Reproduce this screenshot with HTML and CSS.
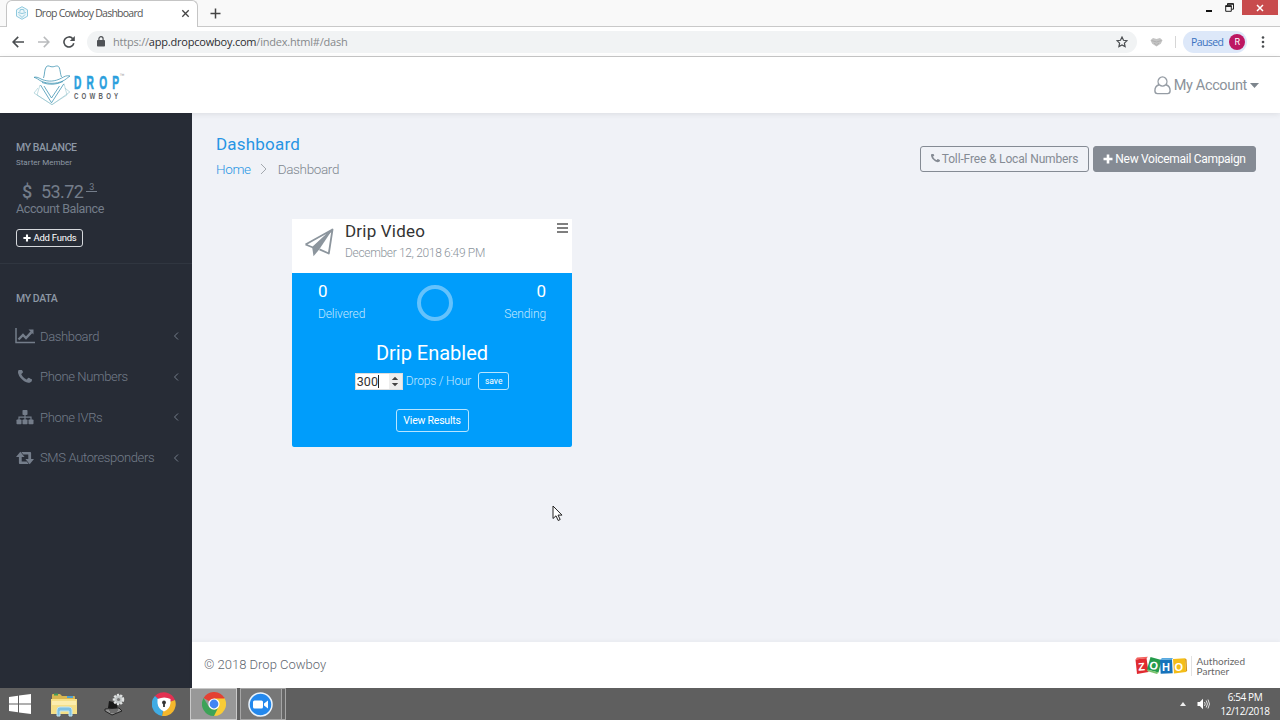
FILE: index.html
```html
<!DOCTYPE html>
<html lang="en">
<head>
  <meta charset="utf-8">
  <meta name="viewport" content="width=device-width, initial-scale=1">
  <title>Drop Cowboy Dashboard</title>
  <link rel="stylesheet" href="styles.css">
</head>
<body>
  <!-- shared icons -->
  <svg class="defs">
    <symbol id="phone" viewBox="192 256 1408 1408">
      <path fill="currentColor" d="M1600 1240q0 27-10 70.5t-21 68.5q-21 50-122 106-94 51-186 51-27 0-53-3.5t-57.5-12.5-47-14.5-55.5-20.5-49-18q-98-35-175-83-127-79-264-216t-216-264q-48-77-83-175-3-9-18-49t-20.5-55.5-14.5-47-12.5-57.5-3.5-53q0-92 51-186 56-101 106-122 25-11 68.5-21t70.5-10q14 0 21 3 18 6 53 76 11 19 30 54t35 63.5 31 53.5q3 4 17.5 25t21.5 35.5 7 28.5q0 20-28.5 50t-62 55-62 53-28.5 46q0 9 5 22.5t8.5 20.5 14 24 11.5 19q76 137 174 235t235 174q2 1 19 11.5t24 14 20.5 8.5 22.5 5q18 0 46-28.5t53-62 55-62 50-28.5q14 0 28.5 7t35.5 21.5 25 17.5q25 15 53.5 31t63.5 35 54 30q70 35 76 53 3 7 3 21z"/>
    </symbol>
    <symbol id="plus" viewBox="0 0 10 10">
      <path d="M5 .5v9M.5 5h9" stroke="currentColor" stroke-width="2.6"/>
    </symbol>
    <symbol id="angle" viewBox="0 0 6 10">
      <path d="M5 1.500L1.500 5 5 8.500" fill="none" stroke="currentColor"/>
    </symbol>
  </svg>

  <div class="screen">
    <div class="tabs">
      <div class="tab">
        <svg class="favicon" width="14" height="14" viewBox="0 0 14 14" fill="none" stroke="#8fc9de">
          <path d="M7 .7l5.500 3.100v6.400L7 13.300l-5.500-3.100V3.800z" fill="#edf7fa"/>
          <path d="M3 6.500q4 2 8 0M4.800 5.800l.6-2.300h3.200l.6 2.300M4 8.500l3 3 3-3"/>
        </svg>
        <span class="tab-title">Drop Cowboy Dashboard</span>
        <svg width="9" height="9" viewBox="0 0 9 9" stroke="#444" stroke-width="1.300"><path d="M1.300 1.300l6.400 6.400M7.700 1.300L1.300 7.700"/></svg>
      </div>
      <svg class="new-tab" width="11" height="11" viewBox="0 0 11 11" stroke="#444" stroke-width="1.500"><path d="M5.500 .5v10M.5 5.500h10"/></svg>
      <div class="window-btns">
        <svg width="8" height="14" viewBox="0 0 8 14"><path d="M1 10h6" stroke="#111" stroke-width="2"/></svg>
        <svg width="9" height="9" viewBox="0 0 9 9" fill="none" stroke="#222"><path d="M2.500 2.500V.7h6v5.500H6.500M.7 2.700h5.600v5.600H.7z"/><path d="M.5 3.200h6M2.500 1h6" stroke-width="1.600"/></svg>
        <div class="win-close">
          <svg width="8" height="8" viewBox="0 0 8 8" stroke="#fff" stroke-width="1.500"><path d="M1 1l6 6M7 1L1 7"/></svg>
        </div>
      </div>
    </div>

    <div class="toolbar">
      <svg width="12" height="12" viewBox="0 0 12 12" fill="none" stroke="#4a4d50" stroke-width="1.600"><path d="M12 6H1.300M6.200 .9L1.100 6l5.100 5.100"/></svg>
      <svg class="forward" width="12" height="12" viewBox="0 0 12 12" fill="none" stroke="#b9bbbd" stroke-width="1.500"><path d="M0 6h10.700M5.800 .9L10.900 6l-5.100 5.100"/></svg>
      <svg class="reload" width="12" height="12" viewBox="0 0 12 12"><path d="M10.800 7.200A5 5 0 1 1 9.700 2.600" fill="none" stroke="#4a4d50" stroke-width="1.600"/><path d="M11.800 0v5H6.800z" fill="#4a4d50"/></svg>
      <div class="url">
        <svg width="8" height="11" viewBox="0 0 8 11"><rect y="4" width="8" height="6.500" rx=".8" fill="#505357"/><path d="M1.900 4.500V2.800a2.100 2.100 0 0 1 4.200 0v1.700" fill="none" stroke="#505357" stroke-width="1.200"/></svg>
        <span class="address">https://<b>app.dropcowboy.com</b>/index.html#/dash</span>
        <svg class="star" width="12" height="12" viewBox="0 0 12 12"><path d="M6 1.100l1.500 3.200 3.500.4-2.600 2.400.7 3.500L6 8.900l-3.100 1.700.7-3.500L1 4.700l3.500-.4z" fill="none" stroke="#4a4d50" stroke-width="1.200"/></svg>
      </div>
      <svg class="ext" width="13" height="10" viewBox="0 0 13 10"><path d="M.5 3.200L3 1l3.500 1L10 1l2.500 2.200-1.700 3.500L6.500 9.500 2.200 6.700z" fill="#c4c4c4"/><path d="M1.500 3.500l5 1.500 5-1.500M4 6l2.500 2L9 6" fill="none" stroke="#a9a9a9" stroke-width=".8"/></svg>
      <div class="divider"></div>
      <div class="paused"><span>Paused</span><i>R</i></div>
      <svg class="dots" width="4" height="14" viewBox="0 0 4 14" fill="#4a4d50"><circle cx="2" cy="2.500" r="1.300"/><circle cx="2" cy="7" r="1.300"/><circle cx="2" cy="11.500" r="1.300"/></svg>
    </div>

    <div class="header">
      <svg class="logo" width="94" height="42" viewBox="0 0 94 42">
        <g fill="none" stroke="#4296b4" stroke-width=".8">
          <path d="M10.500 14c1.500-4 .5-8.500 3-11.500 2-1.800 3.500.8 6.500.3 2.500-.4 4.500-1.800 6 .4 1.500 2.800 1.200 7 2.500 9.800"/>
          <path d="M1 13.300c2.500-.8 5 .6 8 2.200 6.500 2.500 13 2.100 19.500-1.400 3-1.600 5-3 8.500-2.100-3 2-4.500 3.800-7 4.900-7 3.200-15 3.200-22 .2-2.500-1.200-4-3.100-7-3.800z"/>
          <path d="M9 18.500q11 4 21-1"/>
          <path d="M7 21L4 31l15 9.500L34 31l-3-11.500" stroke="#8bbcc6" stroke-width=".5"/>
          <path d="M7.500 21l11 17.800L30.700 20"/>
          <path d="M5 24l-4 5 18 11.800L36.800 28l-5-4" stroke="#7fb9c4" stroke-width=".5"/>
          <path d="M11 22l7.500 12 8-12"/>
        </g>
        <text class="logo-drop" transform="translate(41 25) scale(.55 1)" textLength="82">DROP</text>
        <text class="logo-cowboy" transform="translate(41 34.500) scale(.68 1)" textLength="65">COWBOY</text>
        <text class="logo-tm" x="86.500" y="13">™</text>
      </svg>
      <div class="account">
        <svg width="17" height="20" viewBox="0 0 17 20" fill="none" stroke="#959ca4" stroke-width="1.400"><path d="M5.300 9.800A4.400 4.700 0 1 1 11.700 9.800M5.300 9.800c-3 .7-4.400 3-4.400 6 0 1.800 1 2.800 2.500 2.800h10.200c1.500 0 2.500-1 2.500-2.800 0-3-1.400-5.300-4.400-6-1.800 1.500-4.600 1.500-6.400 0z"/></svg>
        <span>My Account</span>
        <svg width="9" height="5" viewBox="0 0 9 5"><path d="M0 0h9L4.500 5z" fill="#7d858d"/></svg>
      </div>
    </div>

    <div class="main">
      <div class="sidebar">
        <div class="balance-box">
          <div class="side-title">MY BALANCE</div>
          <div class="member">Starter Member</div>
          <div class="amount"><b>$</b><span>53.72</span><sup>3</sup></div>
          <div class="balance-label">Account Balance</div>
          <button class="add-funds"><svg width="8" height="8"><use href="#plus"/></svg><span>Add Funds</span></button>
        </div>
        <div class="side-title data-title">MY DATA</div>
        <ul class="menu">
          <li>
            <svg width="20" height="16" viewBox="0 0 20 16"><path d="M1 0v14.500h19" fill="none" stroke="currentColor" stroke-width="1.500"/><path d="M3.500 11.500L8 7l3 3 5.500-5.800" fill="none" stroke="currentColor" stroke-width="2.400"/><path d="M13.500 1.500H18.500v5z" fill="currentColor"/></svg>
            <span>Dashboard</span>
            <svg class="angle" width="6" height="10"><use href="#angle"/></svg>
          </li>
          <li>
            <svg width="20" height="14"><use href="#phone"/></svg>
            <span>Phone Numbers</span>
            <svg class="angle" width="6" height="10"><use href="#angle"/></svg>
          </li>
          <li>
            <svg width="20" height="16" viewBox="0 0 20 16" fill="currentColor"><rect x="7.500" y="1" width="5" height="5" rx=".8"/><rect x="1.500" y="10.500" width="5" height="4.800" rx=".8"/><rect x="7.500" y="10.500" width="5" height="4.800" rx=".8"/><rect x="13.500" y="10.500" width="5" height="4.800" rx=".8"/><path d="M10 5v6M4 11V8.200h12V11" fill="none" stroke="currentColor" stroke-width="1.200"/></svg>
            <span>Phone IVRs</span>
            <svg class="angle" width="6" height="10"><use href="#angle"/></svg>
          </li>
          <li>
            <svg width="20" height="14" viewBox="0 0 20 14" fill="currentColor"><path d="M1 6l4.300-5.200L9.600 6H6.700v4.500h5l2 2.500H4.800q-.9 0-.9-1V6zM19 8l-4.300 5.200L10.400 8h2.900V3.500h-5l-2-2.500h8.900q.9 0 .9 1v6z"/></svg>
            <span>SMS Autoresponders</span>
            <svg class="angle" width="6" height="10"><use href="#angle"/></svg>
          </li>
        </ul>
      </div>

      <div class="content">
        <div class="page-top">
          <div>
            <h1>Dashboard</h1>
            <div class="crumbs">
              <a>Home</a>
              <svg width="7" height="12" viewBox="0 0 7 12"><path d="M1 1l5 5-5 5" fill="none" stroke="#a3a8ae"/></svg>
              <span>Dashboard</span>
            </div>
          </div>
          <div class="actions">
            <button class="btn-outline"><svg width="9" height="9"><use href="#phone"/></svg><span>Toll-Free &amp; Local Numbers</span></button>
            <button class="btn-solid"><svg width="10" height="10"><use href="#plus"/></svg><span>New Voicemail Campaign</span></button>
          </div>
        </div>

        <div class="card">
          <div class="card-head">
            <svg class="plane" width="30" height="30" viewBox="0 0 30 30"><path d="M1.500 17.500L28.500 2.500 24.800 26.500 15.500 22.400M1.500 17.500L9 20.500 28.500 2.500" fill="none" stroke="#8c959d" stroke-width="1.800" stroke-linejoin="round"/><path d="M8.200 20.200L27.500 4 15.200 22.600 9.500 29.300z" fill="#8c959d"/></svg>
            <div class="card-name">
              <h2>Drip Video</h2>
              <p>December 12, 2018 6:49 PM</p>
            </div>
            <svg class="bars" width="11" height="10" viewBox="0 0 11 10"><path d="M0 1h11M0 5h11M0 9h11" stroke="#555" stroke-width="1.600"/></svg>
          </div>
          <div class="card-body">
            <div class="stats">
              <div class="stat"><b>0</b><span>Delivered</span></div>
              <div class="ring"></div>
              <div class="stat right"><b>0</b><span>Sending</span></div>
            </div>
            <h3>Drip Enabled</h3>
            <div class="rate">
              <div class="number"><span>300</span><i class="caret"></i>
                <div class="spin"><svg width="8" height="11" viewBox="0 0 8 11" fill="#444"><path d="M.8 4h6.400L4 .8zM.8 7h6.400L4 10.200z"/></svg></div>
              </div>
              <span class="per">Drops / Hour</span>
              <button class="save">save</button>
            </div>
            <button class="view">View Results</button>
          </div>
        </div>

        <div class="footer">
          <span>© 2018 Drop Cowboy</span>
          <div class="partner">
            <svg width="54" height="20" viewBox="0 0 54 20">
              <path d="M1.500 3.500l11-1.500 2 14-11.500 2z" fill="#e02b31"/><path d="M1.500 3.500l1.500-2 11-.7-1.500 1.500z" fill="#f2625d"/>
              <path d="M16.500 1l11 3-3 12.500-11.500-3z" fill="#249b4b"/><path d="M13.500 13.500l11 3-1.500 1.500-10-3z" fill="#7ac26c"/>
              <path d="M26 4l12-.7.700 14-12 .5z" fill="#1672bb"/><path d="M26 4l2-2h11l-1 1.500z" fill="#58a9df"/>
              <path d="M39 3l12-.7 1 13.700-12 1.500z" fill="#f4bd18"/><path d="M51 2.300l1.600 1.200.5 11-1.100 1.500z" fill="#d79914"/>
              <g class="zoho"><text x="4" y="14.500" transform="rotate(-5 8 10)">Z</text><text x="15.300" y="13.500" transform="rotate(12 20 10)">O</text><text x="28" y="15">H</text><text x="40.500" y="14.500">O</text></g>
            </svg>
            <div class="partner-text">Authorized<br>Partner</div>
          </div>
        </div>
      </div>
    </div>

    <div class="taskbar">
      <div class="task start"><svg width="22" height="20" viewBox="0 0 22 20" fill="#fff"><path d="M0 3l9-1.300v7.800H0zM10 1.500L22 0v9.500H10zM0 10.500h9v7.800L0 17zM10 10.500h12V20l-12-1.500z"/></svg></div>
      <div class="task"><svg width="28" height="25" viewBox="0 0 28 25"><path d="M2 3q0-1 1-1h7l2 2h12q1 0 1 1v15H2z" fill="#d8b651"/><path d="M4 2.500h4" stroke="#449b57" stroke-width="2"/><path d="M17 5h6" stroke="#4c9ed3" stroke-width="2"/><path d="M1 7h26v15H1z" fill="#f5df86"/><path d="M2 9h24v4H2z" fill="#fbedae"/><path d="M7 24v-6q0-3 3-3h9q3 0 3 3v6h-3v-5h-9v5z" fill="#7ec1e3" stroke="#c2e5f2"/></svg></div>
      <div class="task tool"><svg width="22" height="23" viewBox="0 0 22 23"><path d="M5 8l9 2-1 6-9-1z" fill="#181818"/><path d="M1 16l14-1 3 3-10 4-7-4z" fill="#919191" stroke="#242424"/><path d="M5 17h9M6 19h7" stroke="#444"/><circle cx="14.500" cy="6.500" r="4.500" fill="#bfc4c5" stroke="#e0e2e2" stroke-width="2.500" stroke-dasharray="2 1.200"/><circle cx="14.500" cy="6.500" r="1.600" fill="#777"/></svg></div>
      <div class="task lock"><svg width="24" height="24" viewBox="0 0 24 24"><path d="M12 12L3 4a12 12 0 0 1 20 4z" fill="#e43152"/><path d="M12 12l11-4a12 12 0 0 1-13 16z" fill="#f4b72c"/><path d="M12 12L10 24A12 12 0 0 1 3 4z" fill="#40ace4"/><path d="M5.500 7q7-3 13 0v4q-.5 6-6.500 8.500-6-2.500-6.500-8.500z" fill="#fff"/><circle cx="12" cy="10.500" r="1.900" fill="#333"/><path d="M12 10v5" stroke="#333" stroke-width="1.800"/></svg></div>
      <div class="task active"><svg width="24" height="24" viewBox="0 0 24 24"><path d="M12 12L1.600 6a12 12 0 0 1 20.800 0z" fill="#e34133"/><path d="M12 12V6h10.400A12 12 0 0 1 12 24z" fill="#f8cc36"/><path d="M1.600 6L7 15l5 3 4-2-4 8A12 12 0 0 1 1.600 6z" fill="#3da357"/><path d="M12 6h10.400" stroke="#e34133"/><circle cx="12" cy="12" r="5.600" fill="#fff"/><circle cx="12" cy="12" r="4.400" fill="#4285f4"/></svg></div>
      <div class="task zoom"><svg width="25" height="25" viewBox="0 0 25 25"><circle cx="12.500" cy="12.500" r="11.500" fill="#2388ed" stroke="#eaf4fd" stroke-width="1.500"/><rect x="5" y="8.500" width="10" height="8" rx="1.500" fill="#fff"/><path d="M16 11.500l4-3v8l-4-3z" fill="#fff"/></svg></div>
      <div class="tray">
        <svg width="6" height="4" viewBox="0 0 6 4"><path d="M0 4h6L3 0z" fill="#eee"/></svg>
        <svg width="13" height="12" viewBox="0 0 13 12"><path d="M.5 4h2.300L6 .8v10.400L2.800 8H.5z" fill="#fff"/><path d="M7.500 4q1.500 2 0 4M9.200 2.500q2.500 3.500 0 7M11 1.500q3 4.500 0 9" fill="none" stroke="#eee" stroke-width=".9"/></svg>
        <div class="clock"><span>6:54 PM</span><span>12/12/2018</span></div>
      </div>
    </div>

    <svg class="cursor" width="11" height="17" viewBox="0 0 11 17"><path d="M1 1v12.500l3-2.700 2.200 4.700 2-1-2.200-4.400H10z" fill="#fff" stroke="#222"/></svg>
  </div>
</body>
</html>
```
FILE: styles.css
```css
*{
  box-sizing: border-box;
}
body{
  margin: 0;
  font-family: Roboto, "Liberation Sans", sans-serif;
  color: #7f8790;
}
svg{
  display: block;
  flex: none;
}
.defs{
  position: absolute;
  width: 0;
  height: 0;
}
h1, h2, h3, p, ul{
  margin: 0;
  padding: 0;
  font-weight: 400;
}
span, button{
  white-space: nowrap;
}
button{
  font-family: inherit;
  border-radius: 3px;
  padding: 0;
  display: flex;
  align-items: center;
  justify-content: center;
}
.screen{
  position: relative;
  width: 1280px;
  height: 720px;
  display: flex;
  flex-direction: column;
  overflow: hidden;
}

/* browser */
.tabs{
  height: 27px;
  display: flex;
  align-items: center;
  background: #f9f9f9;
  border-bottom: 1px solid #c9c9c9;
}
.tab{
  width: 192px;
  height: 27px;
  margin-left: 6px;
  padding: 0 7px 1px 8px;
  display: flex;
  align-items: center;
  background: #fff;
  border: 1px solid #c5c5c5;
  border-bottom: none;
  border-radius: 6px 6px 0 0;
}
.tab-title{
  flex: 1;
  margin-left: 6px;
  font: 10.5px "Open Sans", sans-serif;
  letter-spacing: -0.75px;
  color: #555;
}
.new-tab{
  margin-left: 12px;
}
.window-btns{
  margin-left: auto;
  align-self: flex-start;
  display: flex;
  align-items: center;
  gap: 13px;
}
.window-btns svg + svg{
  margin-left: -1px;
}
.win-close{
  width: 36px;
  height: 15px;
  margin-right: 2px;
  margin-left: -5px;
  display: flex;
  align-items: center;
  justify-content: center;
  background: #c84b4d;
}
.toolbar{
  height: 30px;
  padding: 0 15px 0 12px;
  display: flex;
  align-items: center;
  background: #fff;
  border-bottom: 1px solid #c9c9c9;
}
.forward{
  margin-left: 14px;
}
.reload{
  margin-left: 13px;
}
.url{
  width: 1050px;
  height: 22px;
  margin-left: 12px;
  padding: 0 9px 0 10px;
  display: flex;
  align-items: center;
  background: #f1f3f4;
  border-radius: 11px;
}
.address{
  margin-left: 8px;
  font: 11px "Open Sans", sans-serif;
  letter-spacing: -0.21px;
  color: #85888b;
}
.address b{
  font-weight: 400;
  color: #2c2e31;
}
.star{
  margin-left: auto;
}
.ext{
  margin-left: 13px;
}
.divider{
  width: 1px;
  height: 12px;
  margin-left: 12px;
  background: #d6d6d6;
}
.paused{
  width: 64px;
  height: 22px;
  margin-left: 7px;
  padding: 0 2px 0 8px;
  display: flex;
  align-items: center;
  justify-content: space-between;
  background: #dde8f9;
  border-radius: 11px;
  font: 10.5px "Open Sans", sans-serif;
  letter-spacing: -0.6px;
  color: #3a72c0;
}
.paused i{
  width: 16px;
  height: 16px;
  border-radius: 50%;
  background: #bd1762;
  color: #fff;
  font: 9px/16px Roboto, sans-serif;
  text-align: center;
}
.dots{
  margin-left: auto;
}

/* site header */
.header{
  position: relative;
  z-index: 1;
  height: 56px;
  padding: 0 21px 0 33px;
  display: flex;
  align-items: center;
  justify-content: space-between;
  background: #fff;
  box-shadow: 0 1px 6px rgba(0,0,0,.09);
}
.logo-drop{
  font: bold 18.5px "Liberation Sans", sans-serif;
  fill: #2a9fdd;
  stroke: #2a9fdd;
  stroke-width: .6;
}
.logo-cowboy{
  font: bold 9px "Liberation Sans", sans-serif;
  fill: #5e6266;
}
.logo-tm{
  font: 5px "Liberation Sans", sans-serif;
  fill: #999;
}
.account{
  display: flex;
  align-items: center;
  gap: 3px;
  font-size: 14.5px;
  letter-spacing: -0.35px;
  color: #8b929a;
}

.main{
  flex: 1;
  display: flex;
}
.sidebar{
  width: 192px;
  background: #272c36;
  color: #747d8a;
}
.balance-box{
  height: 151px;
  padding: 27px 16px 0;
  border-bottom: 1px solid #303640;
}
.side-title{
  font-size: 10.5px;
  line-height: 15px;
  font-weight: 500;
  letter-spacing: -0.4px;
  color: #8d98a5;
}
.member{
  margin-top: 3px;
  font-size: 8px;
  line-height: 10px;
  color: #8d98a5;
}
.amount{
  display: flex;
  margin: 14px 0 0 6px;
  font-size: 18px;
  line-height: 20px;
}
.amount b{
  width: 19px;
  font-weight: 500;
}
.amount span{
  letter-spacing: -0.6px;
}
.amount sup{
  height: 10px;
  margin-left: 3px;
  padding: 0 3px;
  font-size: 9px;
  line-height: 10px;
  border-bottom: 1px solid #747d8a;
}
.balance-label{
  margin-top: -1px;
  font-size: 12.5px;
  line-height: 15px;
  letter-spacing: -0.4px;
}
.add-funds{
  width: 67px;
  height: 18px;
  margin-top: 13px;
  padding-bottom: 1px;
  gap: 3px;
  background: none;
  border: 1px solid #d5d8dc;
  color: #fff;
  font-size: 9.5px;
  letter-spacing: -0.25px;
}
.data-title{
  margin: 27px 16px 0;
}
.menu{
  margin-top: 10px;
  padding: 0 13px 0 15px;
  list-style: none;
}
.menu li{
  height: 40.5px;
  display: flex;
  align-items: center;
  font-size: 13px;
  font-weight: 300;
  letter-spacing: -0.35px;
}
.menu li span{
  margin-left: 5px;
}
.angle{
  margin-left: auto;
}

/* content */
.content{
  flex: 1;
  display: flex;
  flex-direction: column;
  background: #f0f2f7;
}
.page-top{
  height: 106px;
  padding: 20px 24px 0;
  display: flex;
  justify-content: space-between;
}
h1{
  font-size: 17px;
  line-height: 22px;
  letter-spacing: 0.2px;
  color: #2795e4;
}
.crumbs{
  display: flex;
  align-items: center;
  margin-top: 5px;
  font-size: 13.5px;
  line-height: 18px;
  font-weight: 300;
  letter-spacing: -0.35px;
}
.crumbs a{
  color: #2795e4;
}
.crumbs svg{
  margin: 0 11px 0 9px;
}
.actions{
  display: flex;
  gap: 4px;
  padding-top: 13px;
}
.actions button{
  height: 26px;
  padding-bottom: 1px;
  gap: 2px;
  font-size: 12px;
  border: 1px solid #858b94;
}
.actions .btn-outline{
  width: 169px;
  background: none;
  color: #858b94;
  letter-spacing: -0.15px;
}
.actions .btn-solid{
  width: 163px;
  background: #858b94;
  color: #fff;
  letter-spacing: -0.3px;
}
.card{
  width: 280px;
  margin-left: 100px;
  background: #fff;
}
.card-head{
  height: 54px;
  display: flex;
  padding: 0 4px 0 12px;
}
.plane{
  margin-top: 8px;
}
.card-name{
  flex: 1;
  margin-left: 11px;
}
h2{
  margin-top: 2px;
  font-size: 17px;
  line-height: 21px;
  letter-spacing: 0.2px;
  color: #333;
}
.card-name p{
  margin-top: 3px;
  font-size: 12px;
  line-height: 17px;
  font-weight: 300;
  letter-spacing: -0.33px;
  color: #8c949c;
}
.bars{
  margin-top: 4px;
}
.card-body{
  height: 174px;
  background: #009dfb;
  border-radius: 0 0 2px 2px;
  color: #fff;
  display: flex;
  flex-direction: column;
  align-items: center;
}
.stats{
  width: 100%;
  padding: 8px 26px 0;
  display: flex;
  justify-content: space-between;
}
.stat{
  width: 60px;
  display: flex;
  flex-direction: column;
}
.stat b{
  font-size: 17px;
  line-height: 21px;
  font-weight: 400;
}
.stat span{
  margin-top: 4px;
  font-size: 12px;
  line-height: 16px;
  font-weight: 300;
  letter-spacing: -0.1px;
  color: #c3e7ff;
}
.right{
  text-align: right;
}
.ring{
  width: 36px;
  height: 36px;
  margin: 4px 0 0 5px;
  border: 4px solid #64c2fc;
  border-radius: 50%;
}
h3{
  margin-top: 17px;
  font-size: 20px;
  line-height: 28px;
}
.rate{
  display: flex;
  align-items: center;
  height: 18px;
  margin-top: 5px;
}
.number{
  width: 48px;
  height: 17px;
  padding-left: 1px;
  display: flex;
  align-items: center;
  background: #fff;
  border: 1px solid #ddd;
  color: #333;
  font-size: 12.5px;
}
.caret{
  width: 1px;
  height: 13px;
  background: #222;
}
.spin{
  width: 13px;
  height: 15px;
  margin-left: auto;
  display: flex;
  align-items: center;
  justify-content: center;
  background: #eee;
}
.per{
  margin-left: 3px;
  font-size: 12px;
  font-weight: 300;
  letter-spacing: -0.2px;
  color: #c3e7ff;
}
.save{
  width: 31px;
  height: 18px;
  margin-left: 7px;
  background: none;
  border: 1px solid #b7e5ff;
  color: #fff;
  font-size: 8.5px;
}
.view{
  width: 73px;
  height: 23px;
  margin-top: 19px;
  padding-bottom: 1px;
  background: none;
  border: 1px solid #b7e5ff;
  color: #fff;
  font-size: 10.5px;
  letter-spacing: -0.22px;
}
.footer{
  height: 46px;
  margin-top: auto;
  padding: 0 35px 2px 12px;
  display: flex;
  align-items: center;
  justify-content: space-between;
  background: #fff;
  box-shadow: 0 -1px 4px rgba(0,0,0,.04);
  font-size: 13px;
  font-weight: 300;
  color: #5f6770;
}
.partner{
  display: flex;
  align-items: center;
  padding-top: 3px;
}
.zoho{
  font: bold 11px "Liberation Sans", sans-serif;
  fill: #fff;
}
.partner-text{
  margin-left: 3px;
  padding-left: 5px;
  border-left: 1px solid #e2e2e2;
  font: 10px/10px Lato, sans-serif;
  color: #686868;
}

.taskbar{
  height: 32px;
  display: flex;
  background: #5f5f5f;
}
.task{
  width: 48px;
  display: flex;
  align-items: center;
  justify-content: center;
}
.start{
  width: 40px;
}
.tool{
  width: 54px;
}
.lock{
  padding-right: 5px;
}
.active{
  width: 47px;
  background: #989898;
  border: 1px solid #c9c9c9;
}
.zoom{
  width: 46px;
  margin-left: 3px;
  padding-right: 5px;
  background: #777;
  border: 1px solid #a5a5a5;
  box-shadow: inset -3px 0 #666, inset -4px 0 #a5a5a5;
}
.tray{
  margin-left: auto;
  padding-right: 11px;
  display: flex;
  align-items: center;
}
.tray svg + svg{
  margin-left: 11px;
}
.clock{
  width: 48px;
  margin-left: 11px;
  display: flex;
  flex-direction: column;
  align-items: center;
  font: 10px/14px "Open Sans", sans-serif;
  letter-spacing: -0.4px;
  color: #fff;
}
.cursor{
  position: absolute;
  left: 552px;
  top: 505px;
}
```
